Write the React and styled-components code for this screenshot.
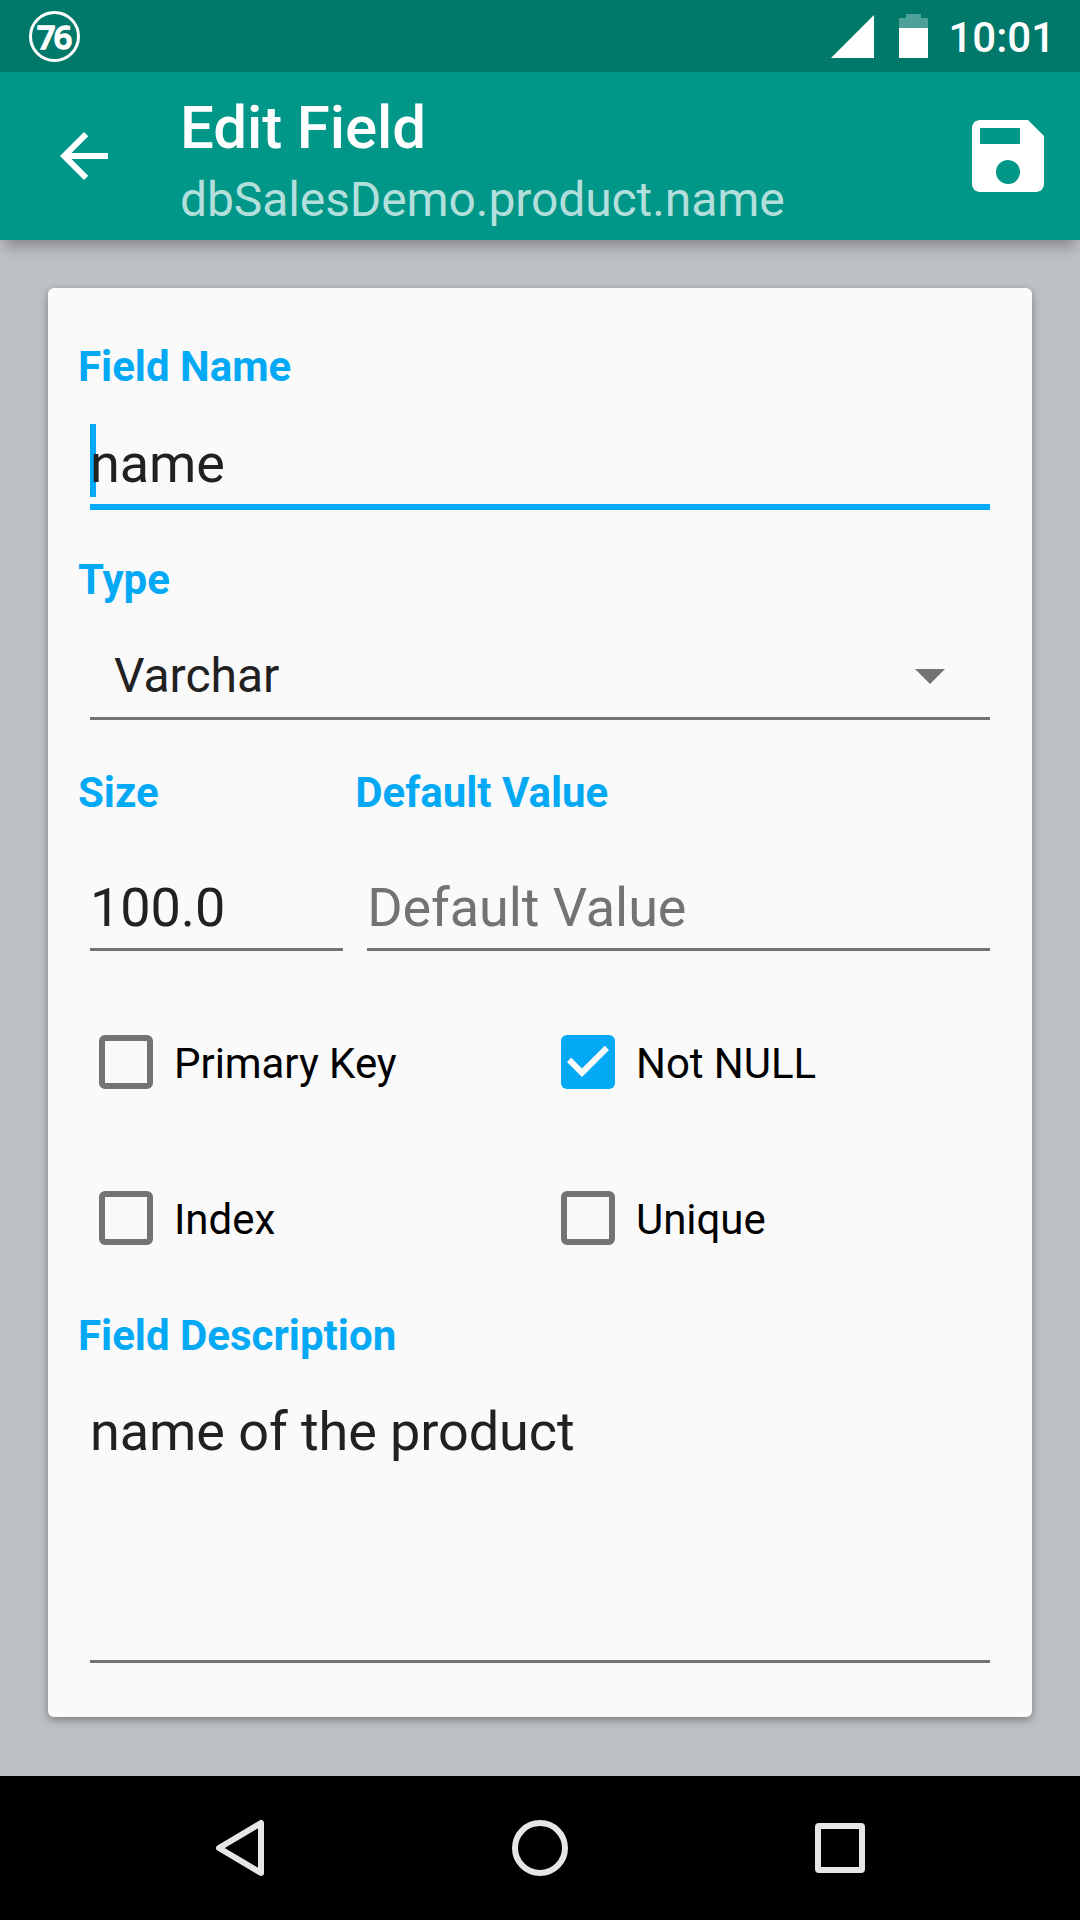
import React from "react";
import styled, { createGlobalStyle } from "styled-components";

const colors = {
    primary: "#009688",
    primaryDark: "#00796b",
    accent: "#03a9f4",
    subtitle: "#b2dfdb",
    background: "#bec2c5",
    card: "#fafafa",
    text: "#212121",
    control: "#737373",
    navIcon: "#e6e6e6"
};

const GlobalStyle = createGlobalStyle`
    *, *::before, *::after {
        box-sizing: border-box;
    }
    body {
        margin: 0;
        background: ${colors.background};
        font-family: Roboto, "Liberation Sans", sans-serif;
    }
    svg {
        display: block;
    }
`;

const Screen = styled.div`
    display: flex;
    flex-direction: column;
    width: 1080px;
    height: 1920px;
    overflow: hidden;
    background: ${colors.background};
`;

const StatusBar = styled.div`
    display: flex;
    align-items: center;
    justify-content: space-between;
    flex: none;
    height: 72px;
    padding: 0 25px 0 29px;
    background: ${colors.primaryDark};
    color: #fff;
`;

const Badge = styled.div`
    display: flex;
    align-items: center;
    justify-content: center;
    width: 51px;
    height: 51px;
    border: 3px solid #fff;
    border-radius: 50%;
    font-family: "Open Sans", "Noto Sans", sans-serif;
    font-size: 33px;
    font-weight: 600;
    line-height: 45px;
    letter-spacing: -2px;
    text-indent: -2px;
    -webkit-text-stroke: 1.3px #fff;
`;

const StatusIcons = styled.div`
    display: flex;
    align-items: center;
`;

const Clock = styled.span`
    margin-left: 20px;
    font-size: 42px;
    font-weight: 500;
    line-height: 49px;
    padding-top: 3px;
`;

const Toolbar = styled.header`
    display: flex;
    flex: none;
    height: 168px;
    padding: 0 24px 0 48px;
    background: ${colors.primary};
    box-shadow: 0 10px 14px -4px rgba(90, 80, 90, 0.55);
`;

const BackIcon = styled.svg`
    width: 72px;
    height: 72px;
    margin-top: 48px;
    fill: #fff;
`;

const Titles = styled.div`
    flex: 1;
    margin-left: 60px;
    padding-top: 20px;
    letter-spacing: -0.1px;
`;

const Title = styled.h1`
    margin: 0;
    color: #fff;
    font-size: 60px;
    font-weight: 500;
    line-height: 71px;
`;

const Subtitle = styled.div`
    margin-top: 8px;
    color: ${colors.subtitle};
    font-size: 48px;
    line-height: 57px;
`;

const SaveIcon = styled.svg`
    width: 96px;
    height: 96px;
    margin-top: 36px;
    fill: #fff;
`;

const Content = styled.main`
    flex: 1;
    padding: 48px;
`;

const Card = styled.section`
    height: 1429px;
    padding: 54px 30px 0;
    border-radius: 6px;
    background: ${colors.card};
    box-shadow: 0 3px 9px rgba(70, 65, 72, 0.55);
`;

const Label = styled.div`
    margin-top: ${props => props.$top || 0}px;
    color: ${colors.accent};
    font-size: 42px;
    font-weight: 700;
    line-height: 49px;
`;

const Field = styled.div`
    position: relative;
    height: ${props => props.$height}px;
    margin: ${props => props.$top}px 12px 0;
    padding-top: ${props => props.$inset || 0}px;
    border-bottom: ${props => (props.$focused ? `6px solid ${colors.accent}` : `3px solid ${colors.control}`)};
    color: ${props => (props.$hint ? colors.control : colors.text)};
    font-size: 54px;
    line-height: 63px;
    letter-spacing: -0.08px;
`;

const Caret = styled.div`
    position: absolute;
    top: 0;
    left: 0;
    width: 6px;
    height: 73px;
    background: ${colors.accent};
`;

const Value = styled.span`
    position: relative;
`;

const Spinner = styled.div`
    display: flex;
    justify-content: space-between;
    height: 73px;
    margin: 43px 12px 0;
    padding: 0 45px 0 24px;
    border-bottom: 3px solid ${colors.control};
    color: ${colors.text};
    font-size: 48px;
    line-height: 57px;
`;

const SpinnerArrow = styled.svg`
    width: 30px;
    height: 15px;
    margin-top: 22px;
    fill: ${colors.control};
`;

const Row = styled.div`
    display: flex;
    margin-top: 48px;
`;

const Cell = styled.div`
    flex: ${props => props.$weight} 1 0;
`;

const Options = styled.div`
    display: grid;
    grid-template-columns: 1fr 1fr;
    grid-auto-rows: 156px;
    margin-top: 33px;
`;

const Option = styled.div`
    display: flex;
    align-items: center;
    gap: 21px;
    padding-left: 21px;
    color: #000;
    font-size: 42px;
    line-height: 49px;
    letter-spacing: -0.05px;
`;

const OptionText = styled.span`
    padding-top: 3px;
`;

const Box = styled.span`
    width: 54px;
    height: 54px;
    border: ${props => (props.$checked ? "none" : `6px solid ${colors.control}`)};
    border-radius: 6px;
    background: ${props => (props.$checked ? colors.accent : "transparent")};
`;

const NavBar = styled.nav`
    display: flex;
    align-items: center;
    justify-content: center;
    gap: 240px;
    flex: none;
    height: 144px;
    background: #000;
`;

const NavIcon = styled.svg`
    width: 60px;
    height: 60px;
    fill: none;
    stroke: ${colors.navIcon};
    stroke-width: 6;
    stroke-linejoin: round;
`;

const Signal = styled.svg`
    width: 43px;
    height: 43px;
    fill: #fff;
`;

const Battery = styled.svg`
    width: 29px;
    height: 44px;
    margin-left: 25px;
    fill: #fff;
`;

const options = [
    { label: "Primary Key", checked: false },
    { label: "Not NULL", checked: true },
    { label: "Index", checked: false },
    { label: "Unique", checked: false }
];

const CheckBox = ({ label, checked }) => (
    <Option>
        <Box $checked={checked}>
            {checked && (
                <svg width="54" height="54" viewBox="3 3 18 18" fill={colors.card}>
                    <path d="M10 17l-5-5 1.41-1.41L10 14.17l7.59-7.59L19 8z" />
                </svg>
            )}
        </Box>
        <OptionText>{label}</OptionText>
    </Option>
);

export default function App() {
    return (
        <Screen>
            <GlobalStyle />
            <StatusBar>
                <Badge>76</Badge>
                <StatusIcons>
                    <Signal viewBox="0 0 43 43">
                        <path d="M43 0v43H0z" />
                    </Signal>
                    <Battery viewBox="0 0 29 44">
                        <path d="M7 0h15v4h7v10H0V4h7z" opacity="0.3" />
                        <path d="M0 14h29v30H0z" />
                    </Battery>
                    <Clock>10:01</Clock>
                </StatusIcons>
            </StatusBar>
            <Toolbar>
                <BackIcon viewBox="0 0 24 24">
                    <path d="M20 11H7.83l5.59-5.59L12 4l-8 8 8 8 1.41-1.41L7.83 13H20z" />
                </BackIcon>
                <Titles>
                    <Title>Edit Field</Title>
                    <Subtitle>dbSalesDemo.product.name</Subtitle>
                </Titles>
                <SaveIcon viewBox="0 0 24 24">
                    <path d="M17 3H5c-1.11 0-2 .9-2 2v14c0 1.1.89 2 2 2h14c1.1 0 2-.9 2-2V7l-4-4zm-5 16c-1.66 0-3-1.34-3-3s1.34-3 3-3 3 1.34 3 3-1.34 3-3 3zm3-10H5V5h10v4z" />
                </SaveIcon>
            </Toolbar>
            <Content>
                <Card>
                    <Label>Field Name</Label>
                    <Field $focused $top={33} $height={86} $inset={8}>
                        <Caret />
                        <Value>name</Value>
                    </Field>
                    <Label $top={45}>Type</Label>
                    <Spinner>
                        <span>Varchar</span>
                        <SpinnerArrow viewBox="0 0 30 15">
                            <path d="M0 0h30L15 15z" />
                        </SpinnerArrow>
                    </Spinner>
                    <Row>
                        <Cell $weight={3}>
                            <Label>Size</Label>
                            <Field $top={59} $height={75}>
                                100.0
                            </Field>
                        </Cell>
                        <Cell $weight={7}>
                            <Label>Default Value</Label>
                            <Field $hint $top={59} $height={75}>
                                Default Value
                            </Field>
                        </Cell>
                    </Row>
                    <Options>
                        {options.map(option => (
                            <CheckBox key={option.label} {...option} />
                        ))}
                    </Options>
                    <Label $top={15}>Field Description</Label>
                    <Field $top={40} $height={263}>
                        name of the product
                    </Field>
                </Card>
            </Content>
            <NavBar>
                <NavIcon viewBox="0 0 60 60">
                    <path d="M51 5v50L9 30z" />
                </NavIcon>
                <NavIcon viewBox="0 0 60 60">
                    <circle cx="30" cy="30" r="25" />
                </NavIcon>
                <NavIcon viewBox="0 0 60 60">
                    <rect x="8" y="8" width="44" height="44" rx="1" />
                </NavIcon>
            </NavBar>
        </Screen>
    );
}
